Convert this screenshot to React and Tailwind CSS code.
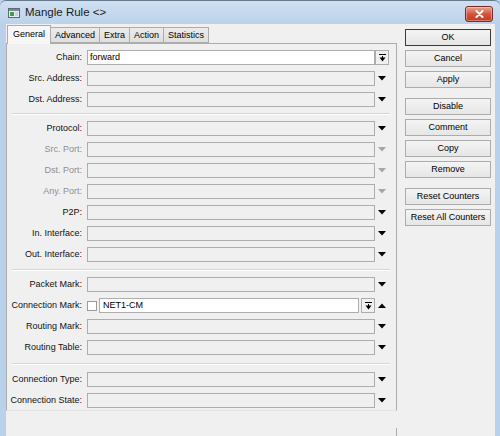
const fieldGroups = [
  [
    { label: "Chain", kind: "chain", value: "forward" },
    { label: "Src. Address" },
    { label: "Dst. Address" },
  ],
  [
    { label: "Protocol" },
    { label: "Src. Port", muted: true },
    { label: "Dst. Port", muted: true },
    { label: "Any. Port", muted: true },
    { label: "P2P" },
    { label: "In. Interface" },
    { label: "Out. Interface" },
  ],
  [
    { label: "Packet Mark" },
    { label: "Connection Mark", kind: "mark", value: "NET1-CM" },
    { label: "Routing Mark" },
    { label: "Routing Table" },
  ],
  [{ label: "Connection Type" }, { label: "Connection State" }],
];

// separator height before each group
const sepHeights = ["", "h-[8px]", "h-[9px]", "h-[11px]"];

const buttonGroups = [
  ["OK", "Cancel", "Apply"],
  ["Disable", "Comment", "Copy", "Remove"],
  ["Reset Counters", "Reset All Counters"],
];

const tabs = ["General", "Advanced", "Extra", "Action", "Statistics"];

function DownArrow({ muted }) {
  return (
    <svg width="8" height="5" viewBox="0 0 8 5" className="block">
      <polygon points="0,0 8,0 4,4.5" fill={muted ? "#a6a6a6" : "#000"} />
    </svg>
  );
}

function UpArrow() {
  return (
    <svg width="8" height="5" viewBox="0 0 8 5" className="block">
      <polygon points="0,5 8,5 4,0.5" fill="#000" />
    </svg>
  );
}

function PickIcon() {
  return (
    <svg width="7" height="8" viewBox="0 0 7 8" className="block">
      <rect x="0" y="0" width="7" height="1" fill="#000" />
      <rect x="3" y="2" width="1" height="2" fill="#000" />
      <polygon points="0.5,3.5 6.5,3.5 3.5,7.5" fill="#000" />
    </svg>
  );
}

function WindowIcon() {
  return (
    <svg width="12" height="10" viewBox="0 0 12 10" className="block">
      <rect x="0.5" y="0.5" width="11" height="9" fill="#e9eef2" stroke="#5d6a75" />
      <rect x="1" y="1" width="10" height="2" fill="#7a8894" />
      <rect x="2" y="4" width="4" height="4" fill="#3f9a4e" />
      <rect x="7" y="4" width="3" height="4" fill="#c9d2da" />
    </svg>
  );
}

function CloseButton() {
  return (
    <div className="flex h-[16px] w-[28px] items-center justify-center rounded-[3px] border border-[#7a2a20] bg-gradient-to-b from-[#e8a493] via-[#d4553c] to-[#c23a22] shadow-[inset_0_0_0_1px_rgba(255,255,255,0.35)]">
      <svg width="9" height="8" viewBox="0 0 9 8">
        <path d="M1.5 1 L7.5 7 M7.5 1 L1.5 7" stroke="#fff" strokeWidth="2" strokeLinecap="round" />
      </svg>
    </div>
  );
}

function Field({ label, kind, value, muted }) {
  const box = "h-[15px] border border-[#adadad]";
  return (
    <div className="flex h-[21px] items-center">
      <span className={`w-[76px] pr-[1px] text-right ${muted ? "text-[#8f8f8f]" : "text-[#111]"}`}>
        {label}:
      </span>
      {kind === "chain" && (
        <>
          <div className={`${box} ml-[4px] flex w-[288px] items-center bg-white pl-[2px]`}>{value}</div>
          <div className="flex h-[15px] w-[14px] items-center justify-center border border-[#adadad] bg-[#f0f0f0]">
            <PickIcon />
          </div>
        </>
      )}
      {kind === "mark" && (
        <>
          <div className="ml-[4px] h-[10px] w-[10px] border border-[#9b9b9b] bg-white" />
          <div className={`${box} ml-[2px] flex w-[260px] items-center bg-white pl-[3px]`}>{value}</div>
          <div className="ml-[2px] flex h-[15px] w-[14px] items-center justify-center border border-[#adadad] bg-[#f0f0f0]">
            <PickIcon />
          </div>
          <div className="flex w-[14px] justify-center">
            <UpArrow />
          </div>
        </>
      )}
      {!kind && (
        <>
          <div className={`${box} ml-[4px] w-[288px] bg-[#f0f0f0]`} />
          <div className="flex w-[14px] justify-center">
            <DownArrow muted={muted} />
          </div>
        </>
      )}
    </div>
  );
}

function Separator({ height }) {
  return (
    <div className={`flex items-center ${height}`}>
      <div className="ml-[5px] mr-[6px] h-[2px] flex-1 border-t border-b border-t-[#d6d6d6] border-b-white" />
    </div>
  );
}

export default function App() {
  return (
    <div className="h-[436px] w-[500px] overflow-hidden bg-[#b9d1ea] font-['Liberation_Sans',Arial,sans-serif] text-[9px] leading-none text-black">
      {/* title bar */}
      <div className="flex h-[24px] items-center rounded-t-[6px] border-t border-[#66788c] bg-gradient-to-b from-[#cfdff0] to-[#bcd3ea] pl-[8px] pr-[7px]">
        <WindowIcon />
        <span className="ml-[5px] text-[11.5px] text-[#1b1b1b]">Mangle Rule &lt;&gt;</span>
        <div className="ml-auto mt-[2px]">
          <CloseButton />
        </div>
      </div>

      {/* client area */}
      <div className="ml-[6px] mr-[5px] flex h-[412px] bg-[#f0f0f0]">
        <div className="flex w-[391px] flex-col">
          <div className="flex h-[19px] items-end pl-[1px]">
            {tabs.map((t, i) =>
              i === 0 ? (
                <div
                  key={t}
                  className="relative z-10 -mb-px flex h-[19px] items-center border border-b-0 border-[#acacac] bg-[#f7f7f7] px-[5px] pb-[2px]"
                >
                  {t}
                </div>
              ) : (
                <div
                  key={t}
                  className="flex h-[16px] items-center border border-l-0 border-[#acacac] bg-gradient-to-b from-[#ececec] to-[#dedede] px-[4px]"
                >
                  {t}
                </div>
              )
            )}
          </div>
          <div className="flex h-[368px] flex-col border border-[#acacac] border-b-[#e4e4e4] pt-[3px]">
            {fieldGroups.map((group, gi) => (
              <div key={gi}>
                {gi > 0 && <Separator height={sepHeights[gi]} />}
                {group.map((f) => (
                  <Field key={f.label} {...f} />
                ))}
              </div>
            ))}
          </div>
          <div className="mt-[17px] h-[8px] w-full border-r border-[#acacac]" />
        </div>

        {/* buttons */}
        <div className="ml-[8px] flex w-[86px] flex-col gap-[10px] pt-[5px]">
          {buttonGroups.map((group, gi) => (
            <div key={gi} className="flex flex-col gap-[4px]">
              {group.map((b) => (
                <div
                  key={b}
                  className={`flex h-[17px] items-center justify-center border bg-gradient-to-b from-[#f4f4f4] to-[#e6e6e6] ${
                    b === "OK" ? "border-[#3a3a3a]" : "border-[#acacac]"
                  }`}
                >
                  {b}
                </div>
              ))}
            </div>
          ))}
        </div>
      </div>
    </div>
  );
}
